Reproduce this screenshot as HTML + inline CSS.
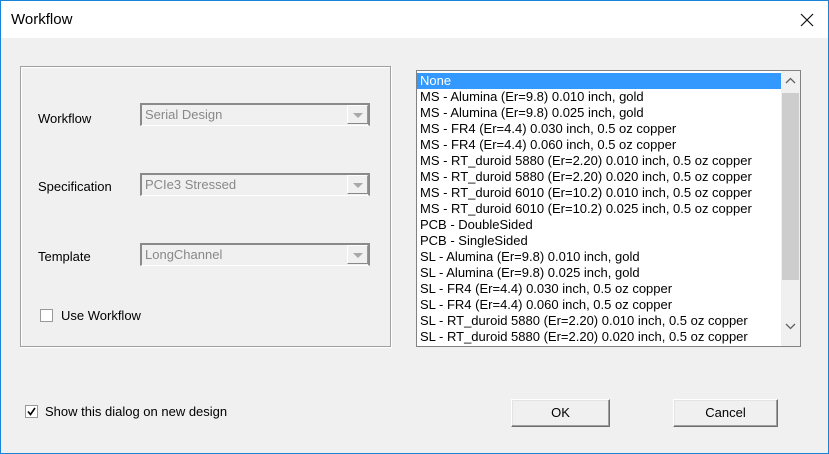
<!DOCTYPE html>
<html><head><meta charset="utf-8"><style>
*{margin:0;padding:0;box-sizing:border-box}
body{width:829px;height:454px;overflow:hidden;background:#f0f0f0;font-family:"Liberation Sans",sans-serif;font-size:13px;color:#000;position:relative}
.win{position:absolute;left:0;top:0;width:829px;height:454px;border:1px solid #1883d7;background:#f0f0f0}
.title{position:absolute;left:0;top:0;width:827px;height:37px;background:#fff}
.title span{position:absolute;left:10px;top:10px;font-size:15px}
.abs{position:absolute}
.group{left:20px;top:66px;width:371px;height:281px;border:1px solid #a0a0a0;box-shadow:inset 1px 1px 0 #fff,1px 1px 0 #fff}
.lbl{position:absolute;font-size:13px}
.combo{position:absolute;left:140px;width:230px;height:23px;background:#f0f0f0;border-top:2px solid #8a8a8a;border-left:2px solid #8a8a8a;border-right:2px solid #8a8a8a;border-bottom:1px solid #fff;color:#888;padding:2px 0 0 3px;font-size:13px}
.combo .btn{position:absolute;right:0;top:0;width:21px;height:19px;border-left:1px solid #fff;border-top:1px solid #fff;border-right:1px solid #999;border-bottom:1px solid #888;background:#f0f0f0}
.combo .btn:after{content:"";position:absolute;left:5px;top:7px;border-left:5px solid transparent;border-right:5px solid transparent;border-top:5px solid #a8a8a8}
.cb{position:absolute;width:13px;height:13px;background:#fff;border:1px solid #999}
.list{left:416px;top:70px;width:385px;height:277px;background:#fff;border:1px solid #828282;overflow:hidden;padding-top:2px}
.item{height:16px;line-height:16px;padding-left:3px;white-space:nowrap;font-size:13px}
.sel{background:#3399ff;color:#fff;width:364px}
.sb{position:absolute;right:0;top:0;width:19px;height:275px;background:#f0f0f0}
.thumb{position:absolute;left:1px;top:22px;width:17px;height:187px;background:#cdcdcd}
.button{position:absolute;height:28px;background:#f0f0f0;border-top:1px solid #fff;border-left:1px solid #fff;border-right:1px solid #6d6d6d;border-bottom:1px solid #6d6d6d;box-shadow:inset -1px -1px 0 #a0a0a0,inset 1px 1px 0 #e3e3e3;text-align:center;line-height:26px}
</style></head><body>
<div class="win">
<div class="title"><span>Workflow</span>
<svg class="abs" style="left:798px;top:11px" width="16" height="16"><path d="M2 2L14 14M14 2L2 14" stroke="#111" stroke-width="1.2"/></svg>
</div>
</div>
<div class="abs group"></div>
<div class="lbl" style="left:38px;top:111px">Workflow</div>
<div class="combo" style="top:103px">Serial Design<div class="btn"></div></div>
<div class="lbl" style="left:38px;top:179px">Specification</div>
<div class="combo" style="top:173px">PCIe3 Stressed<div class="btn"></div></div>
<div class="lbl" style="left:38px;top:249px">Template</div>
<div class="combo" style="top:243px">LongChannel<div class="btn"></div></div>
<div class="cb" style="left:40px;top:309px"></div>
<div class="lbl" style="left:61px;top:308px">Use Workflow</div>

<div class="abs list">
<div class="item sel">None</div>
<div class="item">MS - Alumina (Er=9.8) 0.010 inch, gold</div>
<div class="item">MS - Alumina (Er=9.8) 0.025 inch, gold</div>
<div class="item">MS - FR4 (Er=4.4) 0.030 inch, 0.5 oz copper</div>
<div class="item">MS - FR4 (Er=4.4) 0.060 inch, 0.5 oz copper</div>
<div class="item">MS - RT_duroid 5880 (Er=2.20) 0.010 inch, 0.5 oz copper</div>
<div class="item">MS - RT_duroid 5880 (Er=2.20) 0.020 inch, 0.5 oz copper</div>
<div class="item">MS - RT_duroid 6010 (Er=10.2) 0.010 inch, 0.5 oz copper</div>
<div class="item">MS - RT_duroid 6010 (Er=10.2) 0.025 inch, 0.5 oz copper</div>
<div class="item">PCB - DoubleSided</div>
<div class="item">PCB - SingleSided</div>
<div class="item">SL - Alumina (Er=9.8) 0.010 inch, gold</div>
<div class="item">SL - Alumina (Er=9.8) 0.025 inch, gold</div>
<div class="item">SL - FR4 (Er=4.4) 0.030 inch, 0.5 oz copper</div>
<div class="item">SL - FR4 (Er=4.4) 0.060 inch, 0.5 oz copper</div>
<div class="item">SL - RT_duroid 5880 (Er=2.20) 0.010 inch, 0.5 oz copper</div>
<div class="item">SL - RT_duroid 5880 (Er=2.20) 0.020 inch, 0.5 oz copper</div>
<div class="sb"><div class="thumb"></div>
<svg class="abs" style="left:4px;top:6px" width="11" height="8"><path d="M1 6L5.5 1.5L10 6" fill="none" stroke="#606060" stroke-width="1.3"/></svg>
<svg class="abs" style="left:4px;top:251px" width="11" height="8"><path d="M1 2L5.5 6.5L10 2" fill="none" stroke="#606060" stroke-width="1.3"/></svg>
</div>
</div>

<div class="cb" style="left:25px;top:405px"></div>
<svg class="abs" style="left:26px;top:406px" width="11" height="11"><path d="M2 5.5L4.5 8.5L9 2" fill="none" stroke="#000" stroke-width="1.6"/></svg>
<div class="lbl" style="left:45px;top:404px">Show this dialog on new design</div>
<div class="button" style="left:511px;top:399px;width:99px">OK</div>
<div class="button" style="left:673px;top:399px;width:105px">Cancel</div>
</body></html>
